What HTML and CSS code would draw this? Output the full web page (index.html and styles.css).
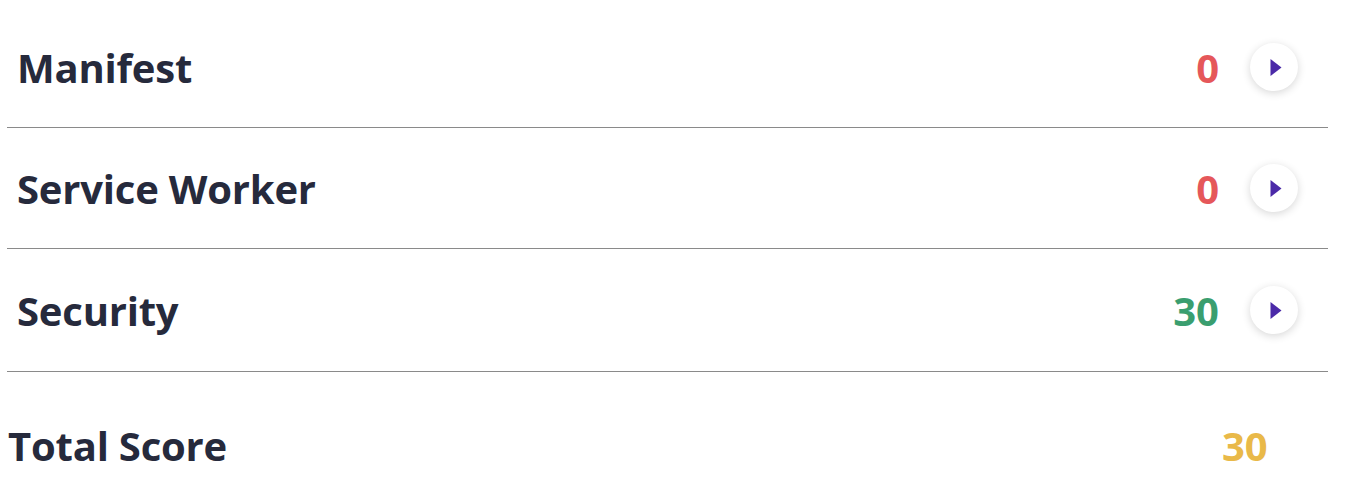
FILE: index.html
```html
<!DOCTYPE html>
<html>
<head>
<meta charset="utf-8">
<link rel="stylesheet" href="styles.css">
</head>
<body>
<div class="panel">
  <div class="row">
    <span class="label">Manifest</span>
    <div class="right">
      <span class="score red">0</span>
      <button class="go" aria-label="Open Manifest"><svg width="12" height="17" viewBox="0 0 12 17"><path d="M0.5 0 L11.5 8.5 L0.5 17 Z" fill="#4b2aa8"/></svg></button>
    </div>
  </div>
  <div class="row">
    <span class="label">Service Worker</span>
    <div class="right">
      <span class="score red">0</span>
      <button class="go" aria-label="Open Service Worker"><svg width="12" height="17" viewBox="0 0 12 17"><path d="M0.5 0 L11.5 8.5 L0.5 17 Z" fill="#4b2aa8"/></svg></button>
    </div>
  </div>
  <div class="row last">
    <span class="label">Security</span>
    <div class="right">
      <span class="score green">30</span>
      <button class="go" aria-label="Open Security"><svg width="12" height="17" viewBox="0 0 12 17"><path d="M0.5 0 L11.5 8.5 L0.5 17 Z" fill="#4b2aa8"/></svg></button>
    </div>
  </div>
  <div class="total">
    <span class="label">Total Score</span>
    <span class="score yellow">30</span>
  </div>
</div>
</body>
</html>
```
FILE: styles.css
```css
html, body {
  margin: 0;
  padding: 0;
  background: #ffffff;
}
body {
  font-family: "Open Sans", "Noto Sans", sans-serif;
  color: #262a3c;
}
.panel {
  width: 1321px;
  margin: 7px 0 0 7px;
}
.row {
  display: flex;
  align-items: center;
  justify-content: space-between;
  height: 120px;
  border-bottom: 1px solid #8a8a8a;
  padding-left: 10px;
}
.row.last {
  height: 122px;
}
.label {
  font-size: 40px;
  font-weight: 700;
  letter-spacing: -0.2px;
}
.right {
  display: flex;
  align-items: center;
  gap: 31px;
  margin-right: 30px;
}
.score {
  font-size: 40px;
  font-weight: 700;
}
.red { color: #e5575a; }
.green { color: #3a9e6f; }
.yellow { color: #e9b949; }
.go {
  width: 48px;
  height: 48px;
  border-radius: 50%;
  border: none;
  background: #fff;
  box-shadow: 0 2px 8px rgba(0,0,0,0.16);
  display: flex;
  align-items: center;
  justify-content: center;
  padding: 0 0 0 3px;
}
.total {
  display: flex;
  align-items: center;
  justify-content: space-between;
  height: 70px;
  padding-top: 38px;
  margin-left: 1px;
}
.total .score {
  width: 106px;
  text-align: left;
}
```
